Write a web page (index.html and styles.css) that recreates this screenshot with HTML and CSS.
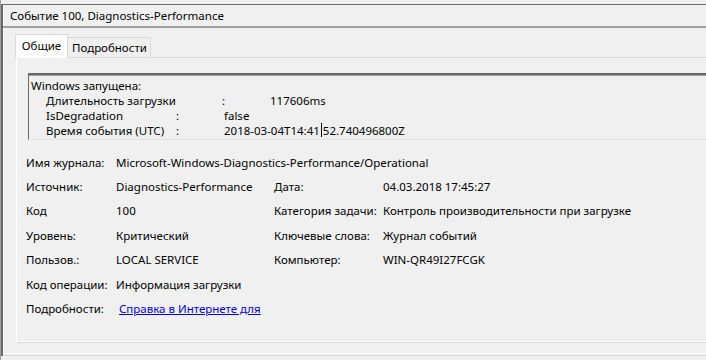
FILE: index.html
```html
<!DOCTYPE html>
<html lang="ru">
<head>
  <meta charset="UTF-8" />
  <title>Событие 100, Diagnostics-Performance</title>
  <link rel="stylesheet" href="styles.css">
</head>
<body>
  <div class="window">
    <div class="title">Событие 100, Diagnostics-Performance</div>

    <div class="tabs">
      <div class="tab active">Общие</div>
      <div class="tab">Подробности</div>
    </div>

    <div class="panel">
      <div class="desc">
        <div class="line">Windows запущена:</div>
        <div class="line indent"><span class="c1">Длительность загрузки</span><span class="c2">:</span><span>117606ms</span></div>
        <div class="line indent"><span class="c3">IsDegradation</span><span class="c4">:</span><span>false</span></div>
        <div class="line indent"><span class="c3">Время события (UTC)</span><span class="c4">:</span><span>2018-03-04T14:41<span class="caret"></span>52.740496800Z</span></div>
      </div>

      <div class="fields">
        <div class="label">Имя журнала:</div>
        <div class="value wide">Microsoft-Windows-Diagnostics-Performance/Operational</div>

        <div class="label">Источник:</div>
        <div class="value">Diagnostics-Performance</div>
        <div class="label">Дата:</div>
        <div class="value">04.03.2018 17:45:27</div>

        <div class="label">Код</div>
        <div class="value">100</div>
        <div class="label">Категория задачи:</div>
        <div class="value">Контроль производительности при загрузке</div>

        <div class="label">Уровень:</div>
        <div class="value">Критический</div>
        <div class="label">Ключевые слова:</div>
        <div class="value">Журнал событий</div>

        <div class="label">Пользов.:</div>
        <div class="value">LOCAL SERVICE</div>
        <div class="label">Компьютер:</div>
        <div class="value">WIN-QR49I27FCGK</div>

        <div class="label">Код операции:</div>
        <div class="value wide">Информация загрузки</div>

        <div class="label">Подробности:</div>
        <div class="value wide"><a href="#" class="link">Справка в Интернете для</a></div>
      </div>
    </div>

    <div class="bottom"></div>
  </div>
</body>
</html>
```

FILE: styles.css
```css
html, body {
  margin: 0;
  background: #f0f0f0;
  overflow: hidden;
}
body {
  font-family: 'Noto Sans', 'Open Sans', sans-serif;
  font-size: 11.5px;
  color: #000;
  height: 360px;
  width: 706px;
  border-left: 1px solid #a0a0a0;
  box-sizing: border-box;
}
.window {
  margin-top: 4px;
  border-top: 1px solid #6d6d6d;
  border-left: 2px solid #696969;
  box-shadow: inset 1px 0 #ffffff;
  height: 351px;
  overflow: hidden;
}
.title {
  height: 21px;
  line-height: 21px;
  padding-left: 7px;
  border-bottom: 2px solid #a0a0a0;
}
.tabs {
  display: flex;
  align-items: flex-end;
  margin-top: 6px;
  padding-left: 12px;
  height: 23px;
  position: relative;
  z-index: 1;
}
.tab {
  height: 20px;
  line-height: 19px;
  padding: 0 4px;
  border: 1px solid #d9d9d9;
  border-bottom: none;
  box-sizing: border-box;
}
.tab.active {
  height: 24px;
  width: 53px;
  text-align: center;
  background: #ffffff;
  line-height: 22px;
  margin-bottom: -1px;
}
.tab + .tab {
  border-left: none;
  width: 83px;
}
.panel {
  width: 760px;
  margin-left: 13px;
  height: 286px;
  border: 1px solid #d9d9d9;
  border-left-color: #ffffff;
  box-shadow: inset 0 -1px #ffffff;
  padding: 15px 0 0 11px;
  box-sizing: border-box;
}
.desc {
  width: 700px;
  border-top: 2px solid #696969;
  border-left: 1px solid #696969;
  border-bottom: 1px solid #e3e3e3;
  box-shadow: inset 0 1px #a0a0a0;
  padding: 3px 0 3px 2px;
  height: 67px;
  box-sizing: border-box;
}
.line {
  height: 15px;
  line-height: 15px;
  white-space: nowrap;
}
.indent {
  padding-left: 15px;
}
.line span {
  display: inline-block;
}
.c1 { width: 176px; }
.c2 { width: 48px; }
.c3 { width: 130px; }
.c4 { width: 48px; }
.caret {
  width: 1px;
  height: 14px;
  background: #000;
  vertical-align: -2px;
  margin: 0 1px;
}
.fields {
  display: grid;
  grid-template-columns: 90px 158px 109px auto;
  grid-auto-rows: 24.4px;
  align-items: center;
  margin-top: 10px;
  margin-left: -2px;
  white-space: nowrap;
}
.value.wide {
  grid-column: 2 / 5;
}
.link {
  color: #0000ee;
  margin-left: 3px;
}
.bottom {
  margin-top: 10px;
  border-top: 1px solid #ffffff;
  border-bottom: 1px solid #d9d9d9;
  height: 1px;
}
```
